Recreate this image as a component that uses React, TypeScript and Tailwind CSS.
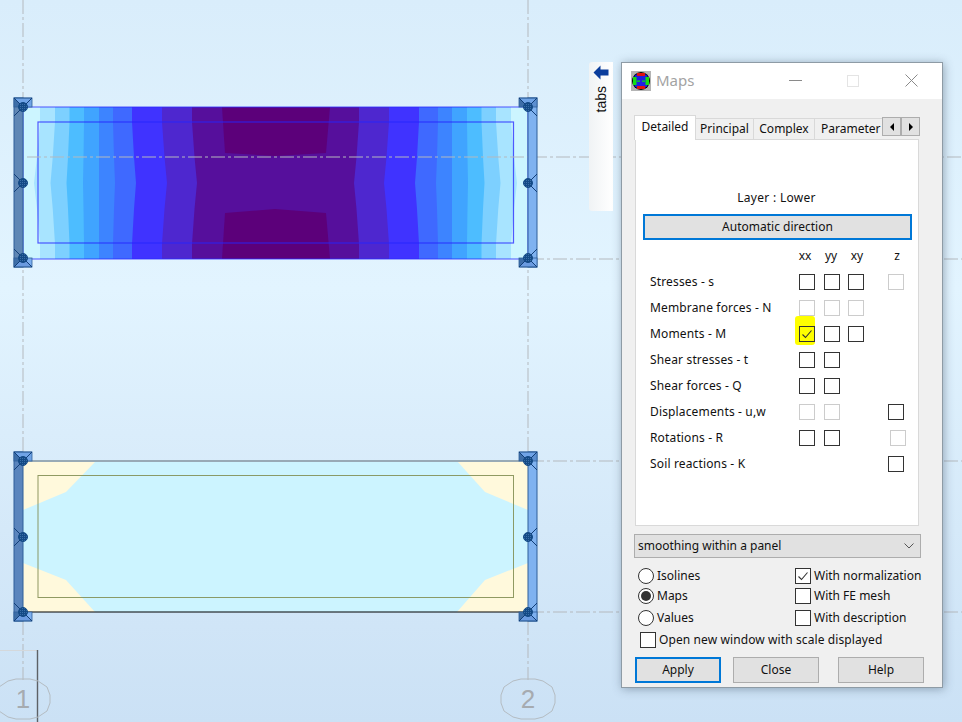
import React from "react"

const bandColors = ["#a8e4ff", "#7dd0ff", "#4dbdff", "#40a4ff", "#3d84ff", "#3f69ff", "#4033ff", "#4e27cf", "#560f9c"]
const topEdges = [40, 55, 69.5, 84, 99, 113, 132, 162, 192]
const midEdges = [34, 50.5, 66.5, 83, 99, 115, 136, 167, 197]
const CENTER = 275.5

const rows = [
  { label: "Stresses - s", boxes: ["on", "on", "on", "off"] },
  { label: "Membrane forces - N", boxes: ["off", "off", "off", ""] },
  { label: "Moments - M", boxes: ["check", "on", "on", ""] },
  { label: "Shear stresses - t", boxes: ["on", "on", "", ""] },
  { label: "Shear forces - Q", boxes: ["on", "on", "", ""] },
  { label: "Displacements - u,w", boxes: ["off", "off", "", "on"] },
  { label: "Rotations - R", boxes: ["on", "on", "", "shift"] },
  { label: "Soil reactions - K", boxes: ["", "", "", "on"] },
]

function bandPoints(t: number, m: number, dir: number) {
  const x = (v: number) => (dir < 0 ? 2 * CENTER - v : v)
  const bend = t + (m - t) * 0.5
  return [
    [x(t), 107],
    [x(t), 122],
    [x(bend), 157],
    [x(m), 183],
    [x(bend), 209],
    [x(t), 244],
    [x(t), 259],
  ]
}

function Band({ i, dir }: { i: number; dir: number }) {
  const a = bandPoints(topEdges[i], midEdges[i], dir)
  const pts = [...a, [CENTER, 259], [CENTER, 107]].map((p) => p.join(",")).join(" ")
  return <polygon points={pts} fill={bandColors[i]} />
}

function Column({ x, top, side, fill }: { x: number; top: number; side: "left" | "right"; fill: string }) {
  const bottom = top + 169
  const barX = side === "left" ? x : x + 9
  const cx = x + 9
  const nodeTop = top + 9
  const nodeBottom = bottom - 9
  const mid = top + 85
  const dir = side === "left" ? -1 : 1
  const outer = side === "left" ? x : x + 18
  return (
    <g>
      <rect x={barX} y={top} width={9} height={169} fill={fill} stroke="#2f5f99" strokeWidth="1" />
      <polygon points={`${x},${top} ${x + 18},${top} ${cx},${nodeTop}`} fill="#6fa3e6" stroke="#2f5f99" strokeWidth="0.8" />
      <polygon points={`${x},${top} ${cx},${nodeTop} ${x},${nodeTop}`} fill="#3d6ea8" />
      <polygon points={`${x + 18},${top} ${cx},${nodeTop} ${x + 18},${nodeTop}`} fill={side === "left" ? "#6fa3e6" : "#5c8fd0"} />
      <polygon points={`${x},${bottom} ${x + 18},${bottom} ${cx},${nodeBottom}`} fill="#6a9be0" stroke="#2f5f99" strokeWidth="0.8" />
      <polygon points={`${x},${bottom} ${cx},${nodeBottom} ${x},${nodeBottom}`} fill="#3d6ea8" />
      <polygon points={`${x + 18},${bottom} ${cx},${nodeBottom} ${x + 18},${nodeBottom}`} fill="#7db0f0" />
      <rect x={x} y={top} width={18} height={9} fill="none" stroke="#2f5f99" strokeWidth="0.8" />
      <rect x={x} y={bottom - 9} width={18} height={9} fill="none" stroke="#2f5f99" strokeWidth="0.8" />
      <g stroke="#123f78" strokeWidth="1">
        <line x1={cx} y1={nodeTop} x2={x} y2={top} />
        <line x1={cx} y1={nodeTop} x2={x + 18} y2={top} />
        <line x1={cx} y1={nodeTop} x2={outer} y2={top + 18} />
        <line x1={cx} y1={nodeBottom} x2={x} y2={bottom} />
        <line x1={cx} y1={nodeBottom} x2={x + 18} y2={bottom} />
        <line x1={cx} y1={nodeBottom} x2={outer} y2={bottom - 18} />
        <line x1={cx} y1={mid} x2={cx + dir * 9} y2={mid - 9} />
        <line x1={cx} y1={mid} x2={cx + dir * 9} y2={mid + 9} />
      </g>
      {[nodeTop, mid, nodeBottom].map((y) => (
        <circle key={y} cx={cx} cy={y} r={4.5} fill="url(#nodeHatch)" stroke="#134a86" strokeWidth="1" />
      ))}
    </g>
  )
}

function Bubble({ cx, w, label }: { cx: number; w: number; label: string }) {
  const l = cx - w / 2
  const r = cx + w / 2
  return (
    <g>
      <path
        d={`M${l + 2} 695 L${l + 5} 687 L${l + 14} 681 L${l + 22} 679 L${r - 22} 679 L${r - 14} 681 L${r - 5} 687 L${r - 2} 695 L${r - 2} 703 L${r - 5} 711 L${r - 14} 717 L${r - 22} 719 L${l + 22} 719 L${l + 14} 717 L${l + 5} 711 L${l + 2} 703 Z`}
        fill="none"
        stroke="#b4bcc2"
        strokeWidth="1"
      />
      <text x={cx} y={708} textAnchor="middle" fontSize="26" fill="#a6abb0" fontFamily="'Liberation Sans', sans-serif">
        {label}
      </text>
    </g>
  )
}

function Drawing() {
  const axis = { stroke: "#b4b9be", strokeWidth: 1, strokeDasharray: "14 3 3 3", fill: "none" }
  return (
    <svg width="962" height="722" viewBox="0 0 962 722" className="absolute inset-0">
      <defs>
        <pattern id="nodeHatch" width="2" height="2" patternUnits="userSpaceOnUse">
          <rect width="2" height="2" fill="#134a86" />
          <rect width="1" height="1" fill="#3a6fa8" />
        </pattern>
      </defs>

      <line x1="23" y1="0" x2="23" y2="680" {...axis} />
      <line x1="528" y1="0" x2="528" y2="680" {...axis} />
      <line x1="530" y1="259" x2="962" y2="259" {...axis} />
      <line x1="530" y1="461" x2="962" y2="461" {...axis} />
      <line x1="530" y1="612" x2="962" y2="612" {...axis} />

      {/* top plate, moments */}
      <rect x="23" y="107" width="505" height="152" fill="#ccf5ff" />
      {topEdges.map((_, i) => (
        <Band key={`l${i}`} i={i} dir={1} />
      ))}
      {topEdges.map((_, i) => (
        <Band key={`r${i}`} i={i} dir={-1} />
      ))}
      <rect x="215" y="107" width="121" height="152" fill="#560f9c" />
      <polygon points="222,107 330,107 326,153 275,156 225,153" fill="#5c007a" />
      <polygon points="225,213 275,209 326,213 330,259 222,259" fill="#5c007a" />
      <rect x="23" y="107" width="505" height="152" fill="none" stroke="#2b2bff" strokeOpacity="0.8" strokeWidth="1" />
      <rect x="38" y="122" width="475.5" height="121" fill="none" stroke="#2424ff" strokeOpacity="0.75" strokeWidth="1.2" />
      <line x1="27" y1="157" x2="962" y2="157" {...axis} />

      {/* bottom plate */}
      <rect x="23" y="461" width="505" height="151" fill="#ccf4ff" />
      <g fill="#fff9dc">
        <polygon points="23,461 96,461 66,492 23,510" />
        <polygon points="23,563 66,580 95,612 23,612" />
        <polygon points="528,461 457,461 485,492 528,510" />
        <polygon points="528,563 485,580 457,612 528,612" />
      </g>
      <rect x="38" y="475.5" width="475.5" height="122" fill="none" stroke="#7c8a4c" strokeOpacity="0.85" strokeWidth="1" />
      <line x1="23" y1="461" x2="528" y2="461" stroke="#98aab6" strokeWidth="2" />
      <line x1="23" y1="612" x2="528" y2="612" stroke="#000000" strokeWidth="1" />

      <Column x={14} top={98} side="left" fill="#5f87b5" />
      <Column x={519} top={98} side="right" fill="#7fb2f0" />
      <Column x={14} top={452} side="left" fill="#5a85bd" />
      <Column x={519} top={452} side="right" fill="#7fb2f0" />

      <line x1="0" y1="650.5" x2="37" y2="650.5" stroke="#d4d8db" strokeWidth="1" />
      <line x1="37.5" y1="650" x2="37.5" y2="722" stroke="#5d6166" strokeWidth="1.4" />
      <Bubble cx={23} w={58} label="1" />
      <Bubble cx={528} w={58} label="2" />
    </svg>
  )
}

function Check({ className = "" }: { className?: string }) {
  return (
    <svg width="12" height="12" viewBox="0 0 12 12" className={className}>
      <path d="M1.5 6.5 L4.5 9.5 L10.5 2.5" fill="none" stroke="#333333" strokeWidth="1.1" />
    </svg>
  )
}

function Box({ state }: { state: string }) {
  if (state === "") return <div />
  if (state === "off") return <div className="w-4 h-4 border border-[#cccccc] bg-white" />
  if (state === "shift") return <div className="w-4 h-4 ml-[2px] border border-[#cccccc] bg-white" />
  if (state === "check") {
    return (
      <div className="relative w-4 h-4">
        <div className="absolute left-[-4px] top-[-10px] w-5 h-[29px] bg-[#ffff00] rounded-[3px]" />
        <div className="absolute inset-0 border border-[#333333] bg-[#ffff00] flex items-center justify-center">
          <Check />
        </div>
      </div>
    )
  }
  return <div className="w-4 h-4 border border-[#333333] bg-white" />
}

function Option({ checked, label }: { checked?: boolean; label: string }) {
  return (
    <div className="flex items-center gap-[3px]">
      <div className="w-4 h-4 border border-[#333333] bg-white flex items-center justify-center">{checked && <Check />}</div>
      <span>{label}</span>
    </div>
  )
}

function Radio({ checked, label }: { checked?: boolean; label: string }) {
  return (
    <div className="flex items-center gap-[3px]">
      <div className="w-4 h-4 rounded-full border border-[#333333] bg-white flex items-center justify-center">
        {checked && <div className="w-[10px] h-[10px] rounded-full bg-[#333333]" />}
      </div>
      <span>{label}</span>
    </div>
  )
}

function MapsDialog() {
  return (
    <div
      className="absolute left-[621px] top-[62px] w-[322px] h-[626px] bg-[#f0f0f0] border border-[#8e9ba5] shadow-[1px_1px_9px_rgba(60,80,100,0.45)] text-[12px] leading-[16px] text-[#111111]"
      style={{ fontFamily: "'Noto Sans', 'Open Sans', sans-serif" }}
    >
      <div className="h-[36px] bg-white flex items-center pl-[9px] pb-[1px]">
        <svg width="20" height="20" viewBox="0 0 20 20">
          <rect width="20" height="20" fill="#b4b4b4" />
          <circle cx="10" cy="10" r="9" fill="#000000" />
          <circle cx="10" cy="10" r="8" fill="#1f1fe0" />
          <path d="M6 2 H14 V5 H6 Z M6 15 H14 V18 H6 Z" fill="#e01010" />
          <path d="M2 6 H5.5 V14 H2 Z M14.5 6 H18 V14 H14.5 Z" fill="#10e010" />
          <path d="M6 9.4 H9 V10.7 H6 Z M11 9.4 H14 V10.7 H11 Z" fill="#10e010" />
        </svg>
        <span className="ml-[5px] text-[#a3a3a3] text-[15px] mb-[1px]">Maps</span>
        <div className="ml-auto flex items-center">
          <div className="w-[13px] h-px bg-[#8a8a8a] mr-[45px]" />
          <div className="w-3 h-3 border border-[#e4e4e4] mr-[46px]" />
          <svg width="13" height="13" viewBox="0 0 13 13" className="mr-[24px]">
            <path d="M0.5 0.5 L12.5 12.5 M12.5 0.5 L0.5 12.5" stroke="#8a8a8a" strokeWidth="1" />
          </svg>
        </div>
      </div>

      <div className="flex pl-[12px] pt-[15px] items-end h-[41px] relative z-10">
        <div className="w-[62px] h-[25px] bg-white border border-b-0 border-[#d9d9d9] flex items-center justify-center pb-[2px]">Detailed</div>
        <div className="w-[58px] h-[22px] bg-[#f0f0f0] border-y border-r border-[#d9d9d9] flex items-center justify-center">Principal</div>
        <div className="w-[61px] h-[22px] bg-[#f0f0f0] border-y border-r border-[#d9d9d9] flex items-center justify-center">Complex</div>
        <div className="w-[67px] h-[22px] bg-[#f0f0f0] border-t border-b border-[#d9d9d9] overflow-hidden pl-[6px] whitespace-nowrap flex items-center">Parameter</div>
        <div className="flex self-start mt-[3px]">
          <div className="w-[19px] h-[19px] bg-[#e1e1e1] border border-[#adadad] flex items-center justify-center">
            <div className="w-0 h-0 border-y-[4px] border-y-transparent border-r-[4px] border-r-black" />
          </div>
          <div className="w-[19px] h-[19px] bg-[#e1e1e1] border border-[#adadad] flex items-center justify-center">
            <div className="w-0 h-0 border-y-[4px] border-y-transparent border-l-[4px] border-l-black" />
          </div>
        </div>
      </div>

      <div className="ml-[13px] mt-[-1px] w-[284px] h-[387px] bg-white border border-[#d9d9d9] flex flex-col">
        <div className="mt-[50px] h-4 text-center pr-[1px] tracking-[0.3px]">Layer : Lower</div>
        <button className="mx-[7px] mt-[8px] h-[26px] w-[269px] bg-[#e1e1e1] border-2 border-[#0078d7] flex items-center justify-center">
          Automatic direction
        </button>
        <div className="mt-[8px] grid grid-cols-[147px_26px_26px_40px_16px] pl-[14px] h-4">
          <span />
          <span className="w-4 text-center">xx</span>
          <span className="w-4 text-center">yy</span>
          <span className="w-4 text-center">xy</span>
          <span className="w-4 text-center">z</span>
        </div>
        <div className="mt-[5px] pl-[14px]">
          {rows.map((r) => (
            <div key={r.label} className="grid grid-cols-[149px_25px_24px_40px_16px] h-[26px] items-center">
              <span className="whitespace-nowrap tracking-[0.15px]">{r.label}</span>
              {r.boxes.map((b, i) => (
                <Box key={i} state={b} />
              ))}
            </div>
          ))}
        </div>
      </div>

      <div className="ml-[12px] mt-[8px] w-[287px] h-[24px] bg-[#e1e1e1] border border-[#adadad] flex items-center pl-[3px] pr-[6px] justify-between">
        <span>smoothing within a panel</span>
        <svg width="10" height="6" viewBox="0 0 10 6">
          <path d="M0.5 0.5 L5 5 L9.5 0.5" fill="none" stroke="#555555" strokeWidth="1" />
        </svg>
      </div>

      <div className="mt-[8px] ml-[16px] grid grid-cols-[157px_1fr] grid-rows-[20px_20px_24px_20px] items-center">
        <Radio label="Isolines" />
        <Option checked label="With normalization" />
        <Radio checked label="Maps" />
        <Option label="With FE mesh" />
        <Radio label="Values" />
        <Option label="With description" />
        <div className="col-span-2 ml-[2px] tracking-[0.1px]">
          <Option label="Open new window with scale displayed" />
        </div>
      </div>

      <div className="mt-[7px] ml-[13px] flex">
        <button className="w-[86px] h-[26px] bg-[#e1e1e1] border-2 border-[#0078d7]">Apply</button>
        <button className="ml-[12px] w-[86px] h-[26px] bg-[#e1e1e1] border border-[#adadad]">Close</button>
        <button className="ml-[19px] w-[86px] h-[26px] bg-[#e1e1e1] border border-[#adadad]">Help</button>
      </div>
    </div>
  )
}

export default function App() {
  return (
    <div className="relative w-[962px] h-[722px] overflow-hidden bg-[linear-gradient(180deg,#d9edfb_0%,#e2f4ff_40%,#daedfb_60%,#cbe1f5_100%)]">
      <Drawing />

      <div className="absolute left-[589px] top-[62px] w-[24px] h-[149px] bg-[linear-gradient(90deg,#f0f3f5,#ffffff)] rounded-l-[3px] flex flex-col items-center">
        <svg width="16" height="15" viewBox="0 0 16 15" className="mt-[3px]">
          <path d="M0.5 7.5 L7.5 0.5 V4.5 H15.5 V10.5 H7.5 V14.5 Z" fill="#0a3d9c" />
        </svg>
        <span
          className="mt-[6px] text-[14px] leading-[16px] text-[#111111] [writing-mode:vertical-rl] rotate-180"
          style={{ fontFamily: "'Liberation Sans', sans-serif" }}
        >
          tabs
        </span>
      </div>

      <MapsDialog />
    </div>
  )
}
